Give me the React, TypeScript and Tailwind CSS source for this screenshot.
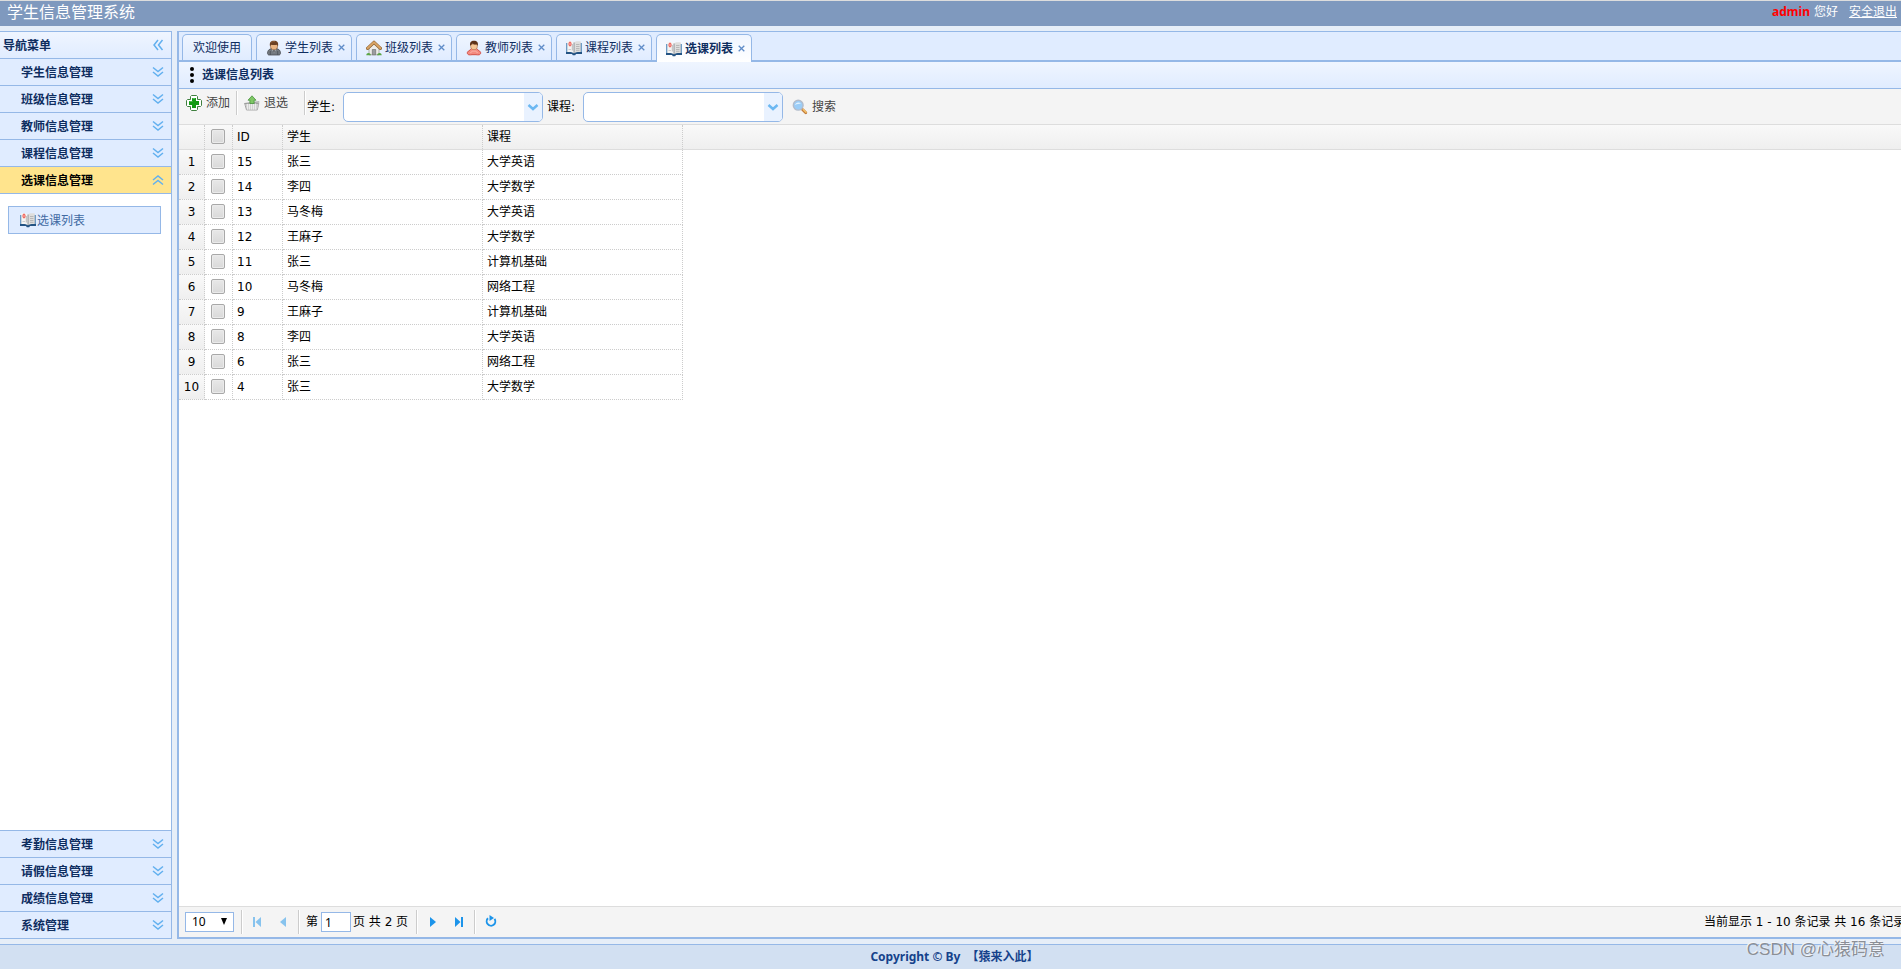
import type { ReactNode } from 'react';

const topMenus = ['学生信息管理', '班级信息管理', '教师信息管理', '课程信息管理'];
const bottomMenus = ['考勤信息管理', '请假信息管理', '成绩信息管理', '系统管理'];

const rows = [
  { id: 15, student: '张三', course: '大学英语' },
  { id: 14, student: '李四', course: '大学数学' },
  { id: 13, student: '马冬梅', course: '大学英语' },
  { id: 12, student: '王麻子', course: '大学数学' },
  { id: 11, student: '张三', course: '计算机基础' },
  { id: 10, student: '马冬梅', course: '网络工程' },
  { id: 9, student: '王麻子', course: '计算机基础' },
  { id: 8, student: '李四', course: '大学英语' },
  { id: 6, student: '张三', course: '网络工程' },
  { id: 4, student: '张三', course: '大学数学' },
];

/* ---------- icons ---------- */

function DoubleArrow({ className = '' }: { className?: string }) {
  return (
    <svg className={`h-4 w-4 shrink-0 ${className}`} viewBox="0 0 16 16" fill="none" stroke="#62b0ef" strokeWidth="1.5">
      <path d="m3 3.5 5 4 5-4M3 8l5 4 5-4" />
    </svg>
  );
}

function StudentIcon() {
  return (
    <svg className="h-4 w-4 shrink-0" viewBox="0 0 16 16">
      <path d="M1.5 13.2c0-2.700 1.500-4.200 4.500-4.700h4c3 .5 4.500 2 4.500 4.700 0 .8-.6 1.800-1.500 1.800H3c-.9 0-1.500-1-1.500-1.800Z" fill="#74797f" stroke="#4b4f55" strokeWidth=".8" />
      <path d="m5.800 8.800 2.200 4.700 2.200-4.700Z" fill="#d9dcdf" />
      <path d="m8 9.500-.8 1.200.8 3 .8-3Z" fill="#33373c" />
      <path d="M4.300 11v4M11.700 11v4" stroke="#4b4f55" strokeWidth=".8" />
      <path d="M4.500 4h7v2.500C11.500 8.700 10 9.700 8 9.700S4.500 8.700 4.500 6.500Z" fill="#eab583" stroke="#7d4f2d" strokeWidth=".6" />
      <path d="M4 6.300C3.300 2.500 4.800.8 8 .8s4.700 1.700 4 5.500L11 4.800c-2 .4-4 .4-6 0Z" fill="#6b4023" />
      <path d="M5.500 2.500C6.200 1.600 7.500 1.400 9 1.700" stroke="#9c6a40" strokeWidth=".8" fill="none" />
    </svg>
  );
}

function TeacherIcon() {
  return (
    <svg className="h-4 w-4 shrink-0" viewBox="0 0 16 16">
      <path d="M5.500 8.500h5c1.200.7 1.500 1.800 2.500 2.300 2.300.9 2.200 3.600 0 4-1.200.3-2-.1-3-.1H6c-1 0-1.800.4-3 .1-2.200-.4-2.300-3.100 0-4 1-.5 1.300-1.600 2.500-2.300Z" fill="#f48a80" stroke="#cf463d" strokeWidth=".9" />
      <path d="M4.500 13c1-1.500 1.500-2 3.500-2s2.500.5 3.500 2" fill="none" stroke="#fbb5ad" />
      <path d="M4.700 4h6.600v2.500C11.300 8.700 10 9.700 8 9.700s-3.300-1-3.300-3.200Z" fill="#f5c797" stroke="#a5683c" strokeWidth=".6" />
      <path d="M4.200 6C3.500 2.500 5 .8 8 .8s4.500 1.700 3.800 5.200L11 4.400c-2.500.4-3.500 0-4.200-.8C6.300 4.600 5 4.700 4.200 6Z" fill="#5d3218" />
    </svg>
  );
}

function HouseIcon() {
  return (
    <svg className="h-4 w-4 shrink-0" viewBox="0 0 16 16">
      <path d="M3 8v6.800h10V8L8 3.500Z" fill="#ededea" stroke="#96968e" strokeWidth=".7" />
      <path d="M6.300 9.500h3.400v5.300H6.300Z" fill="#9a9c9f" stroke="#666" strokeWidth=".6" />
      <path d="M1.600 8.300 8 2.300l6.400 6" fill="none" stroke="#8f6330" strokeWidth="3.200" strokeLinejoin="round" strokeLinecap="round" />
      <path d="M1.600 8.300 8 2.300l6.400 6" fill="none" stroke="#d9a465" strokeWidth="1.900" strokeLinejoin="round" strokeLinecap="round" />
      <path d="M.3 15.300c0-3 4.200-3 4.700 0ZM11 15.300c.5-3 4.700-3 4.700 0Z" fill="#5aa544" />
    </svg>
  );
}

function BookIcon() {
  return (
    <svg className="h-4 w-4 shrink-0" viewBox="0 0 16 16">
      <path d="M0 3h16v11h-6l-.8 1.200H6.800L6 14H0Z" fill="#235383" />
      <path d="M0 3h1v9H0ZM15 3h1v9h-1Z" fill="#6d9cc6" />
      <path d="M1.200 1.500c3-.6 5.500-.3 6.800 1v10.800c-1.600-1.200-4-1.500-6.800-1.300Z" fill="#f5f5f4" />
      <path d="M14.800 1.500c-3-.6-5.500-.3-6.800 1v10.800c1.600-1.200 4-1.500 6.800-1.300Z" fill="#dededd" />
      <path d="M8 2.500v10.800" stroke="#777f88" strokeWidth=".8" />
      <path d="M10 4.500h3.500M10 6.500h3.500M10 8.500h3.500M10 10.300h3.500M6.300 4v6.500" stroke="#b2b2b2" strokeWidth=".9" />
      <path d="M2.500 9.500h2.500" stroke="#c9c9c9" strokeWidth=".9" />
      <ellipse cx="4" cy="4" rx="1" ry="2.100" fill="#fff" stroke="#ee3b30" />
    </svg>
  );
}

function AddIcon() {
  return (
    <svg className="h-4 w-4 shrink-0" viewBox="0 0 16 16">
      <path d="M5.500.5h5l1 1v3h3l1 1v5l-1 1h-3v3l-1 1h-5l-1-1v-3h-3l-1-1v-5l1-1h3v-3Z" fill="#fff" stroke="#3f7f3f" />
      <path d="M6 3h4v3h3v4h-3v3H6v-3H3V6h3Z" fill="#149a14" />
      <path d="M6.500 3.500H9M3.500 6.500h3" stroke="#52bd52" />
    </svg>
  );
}

function BasketIcon() {
  return (
    <svg className="h-4 w-4 shrink-0" viewBox="0 0 16 16">
      <path d="M.7 8.500h14.100l-1.500 6.500H2.500Z" fill="#bdbdbd" stroke="#8a8a8a" strokeWidth=".7" />
      <path d="M1.500 10h13M2 12h12M2.500 14h11M3.500 8.500v6M5.500 8.500v6M7.500 8.500v6M9.500 8.500v6M11.500 8.500v6" stroke="#f2f2f2" strokeWidth=".8" />
      <path d="M.5 8.500 15.300 6.800" stroke="#9d9d9d" strokeWidth="1.200" />
      <path d="m8 .8 4 4.400h-1.900v3.300H5.900V5.200H4Z" fill="#7fc765" stroke="#4a9440" strokeWidth=".8" strokeLinejoin="round" />
    </svg>
  );
}

function SearchIcon() {
  return (
    <svg className="h-4 w-4 shrink-0" viewBox="0 0 16 16">
      <path d="m10.500 10.500 3.300 3.300" stroke="#c07b3a" strokeWidth="2.800" strokeLinecap="round" />
      <path d="m11.200 10.500 2.800 2.800" stroke="#f7c46a" strokeWidth="1.400" strokeLinecap="round" />
      <circle cx="6.200" cy="6.200" r="4.900" fill="#9bcdf7" stroke="#b3bccb" strokeWidth="1.400" />
      <path d="M3 6c.5-2.300 4-3.400 6-1.200-1.700 0-4 .2-6 1.200Z" fill="#e1f1ff" />
    </svg>
  );
}

/* ---------- small parts ---------- */

function MenuHeader({ title, open = false }: { title: string; open?: boolean }) {
  return (
    <button
      type="button"
      aria-expanded={open}
      className={`flex h-[27px] w-full shrink-0 items-center justify-between border-b border-[#95b8e7] pr-[5px] pl-[21px] font-bold ${
        open ? 'bg-[#ffe48d] text-black' : 'bg-[#e0ecff] text-[#0e2d5f]'
      }`}
    >
      <span className="pt-0.5">{title}</span>
      <DoubleArrow className={open ? 'rotate-180' : ''} />
    </button>
  );
}

function Tab({ title, icon, selected = false }: { title: string; icon?: ReactNode; selected?: boolean }) {
  return (
    <div
      className={`flex shrink-0 items-center rounded-t-[5px] border border-b-0 border-[#95b8e7] ${
        selected ? 'h-7 bg-linear-to-b from-[#eff5ff] to-white font-bold' : 'h-[26px] bg-linear-to-b from-[#eff5ff] to-[#e0ecff]'
      } ${icon ? 'w-24 pr-[6px] pl-[9px]' : 'w-[70px] justify-center'}`}
    >
      <button type="button" role="tab" aria-selected={selected} className="flex items-center gap-[3px] whitespace-nowrap text-[#0e2d5f]">
        {icon}
        {title}
      </button>
      {icon && (
        <button type="button" aria-label={`关闭${title}`} className="ml-auto">
          <svg className="h-[7px] w-[7px]" viewBox="0 0 7 7" stroke="#5f8cc8" strokeWidth="1.300">
            <path d="m.7.7 5.600 5.600M6.300.7.7 6.300" />
          </svg>
        </button>
      )}
    </div>
  );
}

function Combo({ id, label }: { id: string; label: string }) {
  return (
    <div className="flex items-center">
      <label htmlFor={id} className="w-9 whitespace-nowrap">{label}:</label>
      <div className="relative">
        <select id={id} className="block h-[30px] w-[200px] appearance-none rounded-[5px] border border-[#95b8e7] bg-white px-1 outline-none" />
        <span className="pointer-events-none absolute inset-y-px right-px flex w-[18px] items-center justify-center rounded-r-[4px] bg-[#e9f2ff]">
          <svg className="h-3 w-3" viewBox="0 0 12 12" fill="none" stroke="#6cb8f2" strokeWidth="2.500">
            <path d="m1.500 4 4.500 4 4.500-4" />
          </svg>
        </span>
      </div>
    </div>
  );
}

function Separator() {
  return <span className="h-6 w-0.5 shrink-0 border-r border-l border-r-white border-l-[#ccc]" />;
}

function CheckBox({ label }: { label: string }) {
  return (
    <input
      type="checkbox"
      aria-label={label}
      className="block h-[15px] w-3.5 appearance-none rounded-[2px] border border-[#a8a8a8] bg-linear-to-b from-[#e8e8e8] to-[#d9d9d9] shadow-[inset_0_0_0_1px_#ebebeb]"
    />
  );
}

function PagerButton({ label, disabled = false, children }: { label: string; disabled?: boolean; children: ReactNode }) {
  return (
    <button type="button" aria-label={label} disabled={disabled} className="flex h-[26px] w-[26px] items-center justify-center disabled:opacity-50">
      <svg className="h-4 w-4" viewBox="0 0 16 16" fill="#1c94ea">{children}</svg>
    </button>
  );
}

/* ---------- layout ---------- */

function Sidebar() {
  return (
    <nav className="flex w-[172px] shrink-0 flex-col border-t border-r border-[#95b8e7] bg-white">
      <div className="flex h-[27px] shrink-0 items-center justify-between border-b border-[#95b8e7] bg-linear-to-b from-[#eff5ff] to-[#e0ecff] pr-[5px] pl-[3px] font-bold text-[#0e2d5f]">
        <span className="pt-0.5">导航菜单</span>
        <button type="button" aria-label="收起">
          <DoubleArrow className="rotate-90" />
        </button>
      </div>
      {topMenus.map((m) => (
        <MenuHeader key={m} title={m} />
      ))}
      <MenuHeader title="选课信息管理" open />
      <div className="flex-1 px-2 pt-3 pr-[10px]">
        <a href="#" className="flex h-7 items-center border border-[#95b8e7] bg-[#e0ecff] pl-[11px] text-[#416aa3]">
          <BookIcon />
          <span className="pt-0.5 pl-px">选课列表</span>
        </a>
      </div>
      <div className="border-t border-[#95b8e7]">
        {bottomMenus.map((m) => (
          <MenuHeader key={m} title={m} />
        ))}
      </div>
    </nav>
  );
}

function Toolbar() {
  return (
    <div className="flex h-9 shrink-0 items-center border-b border-[#ddd] bg-[#f4f4f4] pl-[7px]">
      <div className="mb-2 flex h-6 items-center">
        <button type="button" className="mr-[6px] flex items-center gap-1 text-[#444]">
          <AddIcon />
          添加
        </button>
        <Separator />
        <button type="button" className="mr-4 ml-[6px] flex items-center gap-1 text-[#444]">
          <BasketIcon />
          退选
        </button>
        <Separator />
      </div>
      <div className="ml-px flex items-center gap-1 pt-px">
        <Combo id="student" label="学生" />
        <Combo id="course" label="课程" />
        <button type="button" className="ml-[5px] flex items-center gap-1 text-[#444]">
          <SearchIcon />
          搜索
        </button>
      </div>
    </div>
  );
}

function SelectedCourses() {
  const dotted = 'border-r border-b border-dotted border-[#ccc]';
  const head = 'border-r border-dotted border-[#ccc] px-1 font-normal';
  return (
    <div className="flex-1 overflow-hidden">
      <div className="border-b border-[#ddd] bg-linear-to-b from-[#f9f9f9] to-[#efefef]">
        <table className="w-[504px] table-fixed border-separate border-spacing-0 text-left">
          <thead>
            <tr className="h-6">
              <th className={`w-[26px] ${head}`} />
              <th className="w-7 border-r border-dotted border-[#ccc] pb-px pl-[6px]"><CheckBox label="全选" /></th>
              <th className={`w-[50px] ${head}`}>ID</th>
              <th className={`w-[200px] ${head}`}>学生</th>
              <th className={`w-[200px] ${head}`}>课程</th>
            </tr>
          </thead>
        </table>
      </div>
      <table className="w-[504px] table-fixed border-separate border-spacing-0 text-left">
        <tbody>
          {rows.map((row, i) => (
            <tr key={row.id} className="h-[25px]">
              <td className={`w-[26px] bg-linear-to-b from-[#f9f9f9] to-[#efefef] text-center ${dotted}`}>{i + 1}</td>
              <td className={`w-7 pb-px pl-[6px] ${dotted}`}><CheckBox label={`选择 ${row.id}`} /></td>
              <td className={`w-[50px] px-1 ${dotted}`}>{row.id}</td>
              <td className={`w-[200px] px-1 ${dotted}`}>{row.student}</td>
              <td className={`w-[200px] px-1 ${dotted}`}>{row.course}</td>
            </tr>
          ))}
        </tbody>
      </table>
    </div>
  );
}

function Pager() {
  return (
    <div className="flex h-[31px] shrink-0 items-center border-t border-[#ddd] bg-[#f4f4f4] pl-[6px]">
      <div className="relative mr-[7px] font-['Noto_Sans',sans-serif]">
        <select aria-label="每页记录数" className="block h-5 w-[49px] appearance-none border border-[#95b8e7] bg-white pl-[6px] outline-none">
          <option>10</option>
        </select>
        <svg className="pointer-events-none absolute top-[6px] right-[7px] h-[7px] w-[6px]" viewBox="0 0 6 7">
          <path d="M0 0h6L3 7Z" />
        </svg>
      </div>
      <Separator />
      <div className="mr-[2px] ml-px flex">
        <PagerButton label="首页" disabled><path d="M4 3h2v10H4ZM12 3v10L6.500 8Z" /></PagerButton>
        <PagerButton label="上一页" disabled><path d="M11 3v10L5 8Z" /></PagerButton>
      </div>
      <Separator />
      <label htmlFor="page" className="mr-[3px] ml-[6px]">第</label>
      <input id="page" defaultValue="1" className="h-5 w-[30px] border border-[#95b8e7] bg-white px-[3px] font-['Noto_Sans',sans-serif] outline-none" />
      <span className="mr-2 ml-[2px] whitespace-nowrap">页 共 2 页</span>
      <Separator />
      <div className="mx-[2px] flex">
        <PagerButton label="下一页"><path d="M5 3v10l6-5Z" /></PagerButton>
        <PagerButton label="末页"><path d="M10 3h2v10h-2ZM4 3v10l5.500-5Z" /></PagerButton>
      </div>
      <Separator />
      <div className="ml-[2px]">
        <PagerButton label="刷新">
          <path d="M5 4.300a4.300 4.300 0 1 0 6.500.6" fill="none" stroke="#1c94ea" strokeWidth="1.900" />
          <path d="M6.500 1v6l4.500-3Z" />
        </PagerButton>
      </div>
      <div className="ml-auto w-[197px] whitespace-nowrap">当前显示 1 - 10 条记录 共 16 条记录</div>
    </div>
  );
}

export default function App() {
  return (
    <div className="relative flex h-screen flex-col overflow-hidden bg-[#e6eef8] font-['DejaVu_Sans','Noto_Sans_CJK_SC',sans-serif] text-xs leading-4 text-black">
      <header className="flex h-[26px] shrink-0 items-start justify-between border-t border-[#ddd] bg-[#7f99be] pr-1 pl-[7px] text-white">
        <h1 className="font-['Noto_Sans_CJK_SC',sans-serif] text-base leading-5">学生信息管理系统</h1>
        <div className="flex pt-[3px] font-['Noto_Sans','Noto_Sans_CJK_SC',sans-serif]">
          <span className="mr-1 font-bold text-[#f00]">admin</span>
          <span className="mr-[11px]">您好</span>
          <a href="#" className="underline">安全退出</a>
        </div>
      </header>

      <div className="flex min-h-0 flex-1 gap-[5px] py-[5px]">
        <Sidebar />
        <main className="flex min-w-0 flex-1 flex-col border-t border-b-2 border-l-2 border-[#95b8e7] bg-white">
          <div role="tablist" className="flex h-[30px] shrink-0 gap-1 border-b-2 border-[#95b8e7] bg-[#e0ecff] pt-[2px] pl-[3px]">
            <Tab title="欢迎使用" />
            <Tab title="学生列表" icon={<StudentIcon />} />
            <Tab title="班级列表" icon={<HouseIcon />} />
            <Tab title="教师列表" icon={<TeacherIcon />} />
            <Tab title="课程列表" icon={<BookIcon />} />
            <Tab title="选课列表" icon={<BookIcon />} selected />
          </div>
          <div className="flex h-[27px] shrink-0 items-center gap-[2px] border-b border-[#95b8e7] bg-linear-to-b from-[#eff5ff] to-[#e0ecff] pl-[5px] font-bold text-[#0e2d5f]">
            <svg className="h-4 w-4" viewBox="0 0 16 16" fill="#000">
              <circle cx="8" cy="2" r="2" />
              <circle cx="8" cy="8" r="2" />
              <circle cx="8" cy="14" r="2" />
            </svg>
            选课信息列表
          </div>
          <Toolbar />
          <SelectedCourses />
          <Pager />
        </main>
      </div>

      <footer className="flex h-[25px] shrink-0 items-center justify-center border-t border-[#95b8e7] bg-[#d2e0f2] pl-2 font-['DejaVu_Sans','Noto_Sans','Noto_Sans_CJK_SC',sans-serif] font-bold text-[#15428b]">
        <span className="font-['Noto_Sans','Noto_Sans_CJK_SC',sans-serif]">Copyright&nbsp;© By&nbsp; 【猿来入此】</span>
      </footer>

      <div className="pointer-events-none absolute right-4 bottom-[5px] font-['Liberation_Sans','Noto_Sans_CJK_SC',sans-serif] text-[17px] leading-7 text-[#8b8f96] [text-shadow:-1px_-1px_0_#f2f5fa]">
        CSDN @心猿码意
      </div>
    </div>
  );
}
